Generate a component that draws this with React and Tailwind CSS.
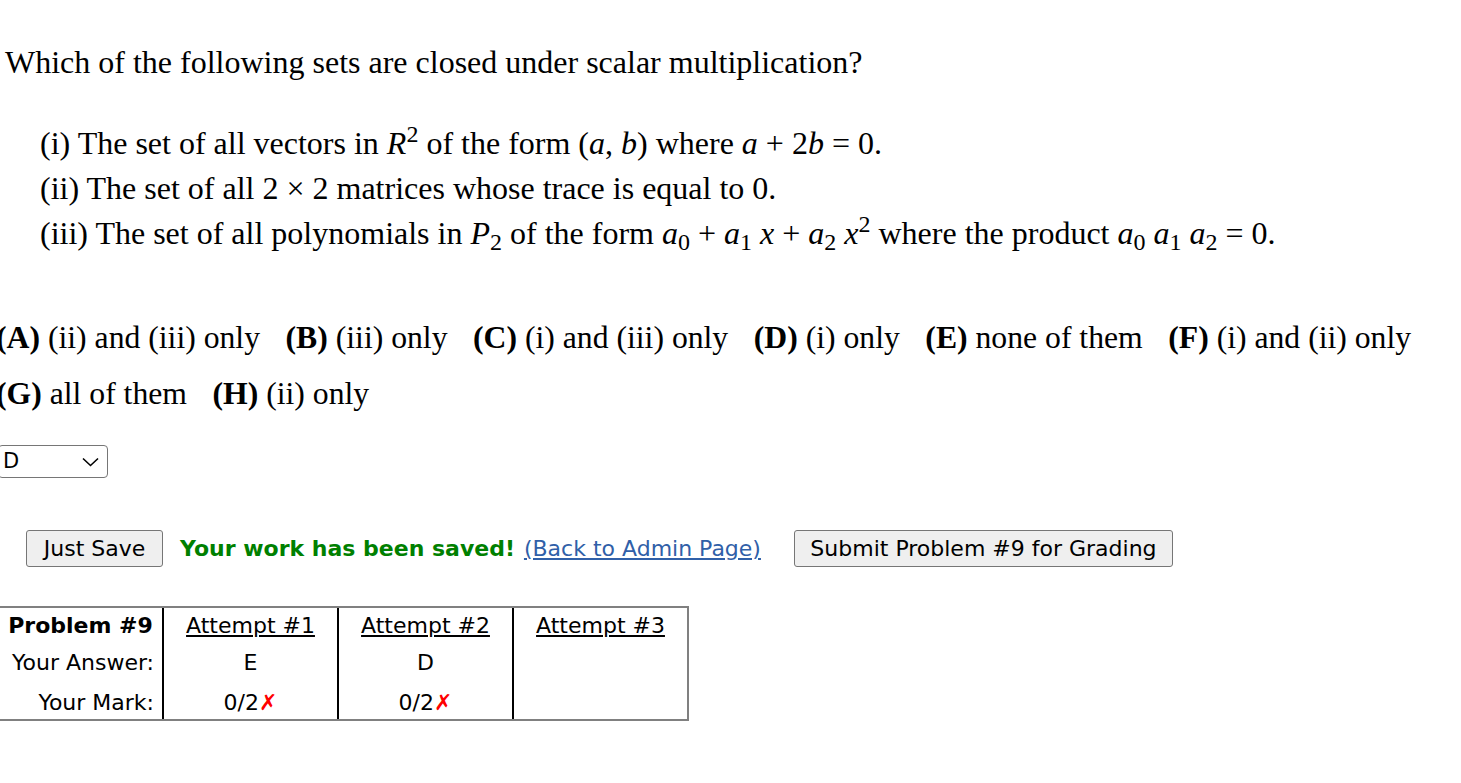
import React from "react";

const serif = { fontFamily: '"Liberation Serif", "Times New Roman", serif' };
const sans = { fontFamily: '"DejaVu Sans", Verdana, sans-serif' };

function Opt({ label, text, last }) {
  return (
    <span className={"whitespace-nowrap inline-block " + (last ? "" : "mr-[25.5px]")}>
      <b>({label})</b> {text}
    </span>
  );
}

function Mark() {
  return (
    <span>
      0/2<span className="text-[#ff0000]">✗</span>
    </span>
  );
}

export default function App() {
  return (
    <div className="min-h-[783px] w-full bg-white text-black overflow-hidden" style={serif}>
      <div className="pt-[42px]">
        <p className="ml-[5px] text-[32px] leading-[40px]">
          Which of the following sets are closed under scalar multiplication?
        </p>

        <div className="ml-[40px] mt-[39px] text-[32px] leading-[45px]">
          <div>
            (i) The set of all vectors in <i>R</i>
            <sup>2</sup> of the form (<i>a</i>, <i>b</i>) where <i>a</i> + 2<i>b</i> = 0.
          </div>
          <div>(ii) The set of all 2 × 2 matrices whose trace is equal to 0.</div>
          <div>
            (iii) The set of all polynomials in <i>P</i>
            <sub>2</sub> of the form <i>a</i>
            <sub>0</sub> + <i>a</i>
            <sub>1</sub> <i>x</i> + <i>a</i>
            <sub>2</sub> <i>x</i>
            <sup>2</sup> where the product <i>a</i>
            <sub>0</sub> <i>a</i>
            <sub>1</sub> <i>a</i>
            <sub>2</sub> = 0.
          </div>
        </div>

        <div className="-ml-[4px] mt-[54px] text-[31.7px] leading-[56px] w-[1461px]">
          <Opt label="A" text="(ii) and (iii) only" />
          <Opt label="B" text="(iii) only" />
          <Opt label="C" text="(i) and (iii) only" />
          <Opt label="D" text="(i) only" />
          <Opt label="E" text="none of them" />
          <Opt label="F" text="(i) and (ii) only" />
          <Opt label="G" text="all of them" />
          <Opt label="H" text="(ii) only" last />
        </div>

        <div
          className="-ml-[2px] mt-[23px] w-[110px] h-[33px] border-[1.5px] border-[#767676] rounded-[4px] flex items-center justify-between pl-[4px] pr-[8px] text-[21px]"
          style={sans}
        >
          <span>D</span>
          <svg width="17" height="10" viewBox="0 0 17 10" fill="none">
            <path d="M1 1.5 L8.5 8.5 L16 1.5" stroke="#000" strokeWidth="1.6" />
          </svg>
        </div>

        <div className="mt-[52px] flex items-center text-[22px]" style={sans}>
          <button className="ml-[26px] w-[137px] h-[37px] bg-[#efefef] border-[1.5px] border-[#767676] rounded-[3px] flex items-center justify-center">
            Just Save
          </button>
          <span className="ml-[17px] font-bold text-[#008000]">Your work has been saved!</span>
          <a className="ml-[9px] text-[#3060a8] underline cursor-pointer">(Back to Admin Page)</a>
          <button className="ml-[33px] w-[379px] h-[37px] bg-[#efefef] border-[1.5px] border-[#767676] rounded-[3px] flex items-center justify-center">
            Submit Problem #9 for Grading
          </button>
        </div>

        <table
          className="-ml-[3px] mt-[39px] border-2 border-[#808080] text-[22px] border-separate border-spacing-0"
          style={sans}
        >
          <tbody>
            <tr className="h-[35px]">
              <th className="w-[163px] font-bold text-center">Problem #9</th>
              <td className="w-[175px] border-l-2 border-black text-center">
                <span className="underline">Attempt #1</span>
              </td>
              <td className="w-[175px] border-l-2 border-black text-center">
                <span className="underline">Attempt #2</span>
              </td>
              <td className="w-[175px] border-l-2 border-black text-center">
                <span className="underline">Attempt #3</span>
              </td>
            </tr>
            <tr className="h-[39px]">
              <td className="text-right pr-[8px]">Your Answer:</td>
              <td className="border-l-2 border-black text-center">E</td>
              <td className="border-l-2 border-black text-center">D</td>
              <td className="border-l-2 border-black text-center"></td>
            </tr>
            <tr className="h-[37px]">
              <td className="text-right pr-[8px] pt-[3px]">Your Mark:</td>
              <td className="border-l-2 border-black text-center pt-[3px]">
                <Mark />
              </td>
              <td className="border-l-2 border-black text-center pt-[3px]">
                <Mark />
              </td>
              <td className="border-l-2 border-black text-center"></td>
            </tr>
          </tbody>
        </table>
      </div>
    </div>
  );
}
